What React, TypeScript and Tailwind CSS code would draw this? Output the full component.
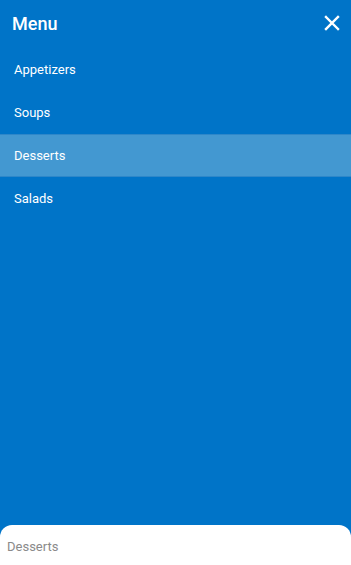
import React, { useState } from 'react';

const categories = ['Appetizers', 'Soups', 'Desserts', 'Salads'];

const App: React.FC = () => {
  const [selected, setSelected] = useState('Desserts');

  return (
    <div className="h-[565px] w-full flex flex-col bg-[#0074c8]" style={{ fontFamily: 'Roboto, "Noto Sans", sans-serif' }}>
      {/* Header */}
      <div className="h-[48px] flex items-center justify-between pl-[12px] pr-[9px] pb-[2px]">
        <h1 className="text-[18px] font-medium text-white">Menu</h1>
        <button type="button" className="w-[20px] h-[20px] flex items-center justify-center text-white">
          <svg width="16" height="16" viewBox="0 0 16 16" fill="none" stroke="currentColor" strokeWidth="2.4" strokeLinecap="square">
            <path d="M2 2L14 14M14 2L2 14" />
          </svg>
        </button>
      </div>

      {/* Items */}
      <nav className="flex-1 flex flex-col">
        {categories.map(cat => (
          <button
            key={cat}
            type="button"
            onClick={() => setSelected(cat)}
            className={`h-[43px] flex items-center px-[14px] text-left text-[13px] text-white ${
              selected === cat ? 'bg-[#4398d1] border-y border-[#2e87c9]' : ''
            }`}
          >
            {cat}
          </button>
        ))}
      </nav>

      {/* Bottom panel */}
      <div className="h-[40px] bg-white rounded-t-[12px] flex items-center px-[7px] pt-[4px]">
        <span className="text-[13px] text-[#8a8a8a]">{selected}</span>
      </div>
    </div>
  );
};

export default App;
